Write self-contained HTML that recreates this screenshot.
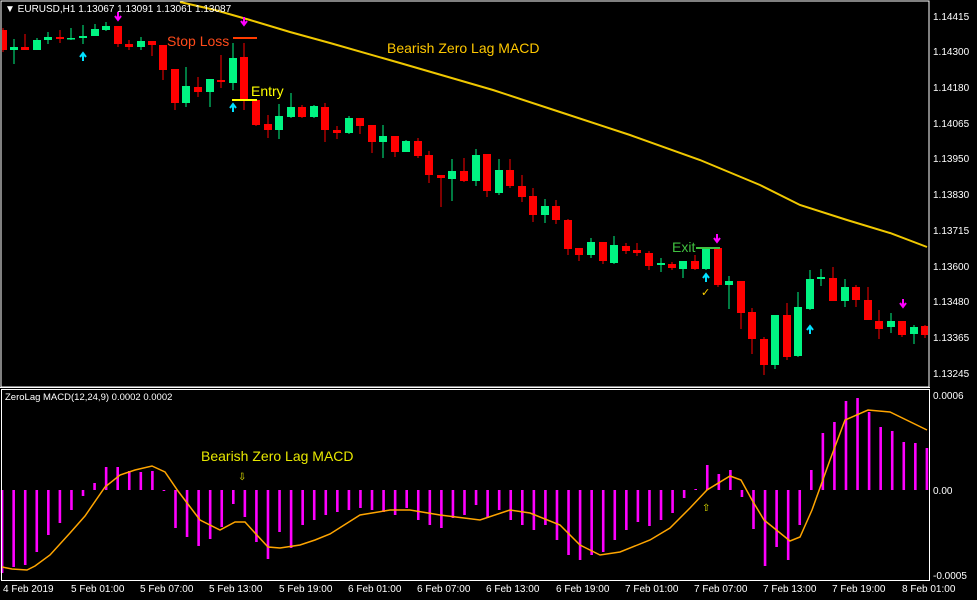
<!DOCTYPE html>
<html><head><meta charset="utf-8"><style>
html,body{margin:0;padding:0;background:#000;overflow:hidden}
svg{display:block}
text{font-family:"Liberation Sans",sans-serif}
</style></head><body>
<svg id="s" width="977" height="600" xmlns="http://www.w3.org/2000/svg">
<rect width="977" height="600" fill="#000"/>
<g id="cd"></g>
<polyline fill="none" stroke="#f0c800" stroke-width="2" points="180,2 215,10 250,20 290,32 330,43 400,63 493,90 560,112 630,135 700,160 760,185 800,205 847,220 890,233 927,247"/>
<line x1="233" y1="38" x2="257" y2="38" stroke="#ff3c00" stroke-width="2"/>
<text x="167" y="46" fill="#ff4a1a" font-size="14">Stop Loss</text>
<line x1="232" y1="100" x2="257" y2="100" stroke="#ffff00" stroke-width="2"/>
<text x="251" y="96" fill="#ffff00" font-size="14">Entry</text>
<text x="387" y="53" fill="#ffc800" font-size="14">Bearish Zero Lag MACD</text>
<line x1="696" y1="248" x2="720" y2="248" stroke="#40c040" stroke-width="2"/>
<text x="672" y="252" fill="#40c040" font-size="14">Exit</text>
<g id="ar"></g>
<text x="701" y="296" fill="#ffd000" font-size="11">✓</text>
<rect x="1" y="1" width="928" height="386" fill="none" stroke="#fff" stroke-width="1"/>
<line x1="0" y1="387.5" x2="930" y2="387.5" stroke="#fff" stroke-width="1"/>
<text x="5" y="12" fill="#fff" font-size="10">▼ EURUSD,H1  1.13067 1.13091 1.13061 1.13087</text>
<g fill="#fff" font-size="10">
<text x="933" y="20">1.14415</text><text x="933" y="55">1.14300</text><text x="933" y="91">1.14180</text><text x="933" y="127">1.14065</text><text x="933" y="162">1.13950</text><text x="933" y="198">1.13830</text><text x="933" y="234">1.13715</text><text x="933" y="270">1.13600</text><text x="933" y="305">1.13480</text><text x="933" y="341">1.13365</text><text x="933" y="377">1.13245</text>
<text x="933" y="399">0.0006</text><text x="933" y="494">0.00</text><text x="933" y="579">-0.0005</text>
</g>
<g id="hg"></g>
<polyline fill="none" stroke="#ffa500" stroke-width="1.5" points="2,567 12,569 27,570 35,566 50,555 70,533 85,516 105,487 120,475 135,470 152,466 165,472 178,491 200,520 220,530 235,522 245,522 255,533 268,547 280,548 300,545 315,540 330,534 360,515 390,510 410,510 440,515 480,520 510,510 530,513 560,525 580,545 600,555 620,552 650,540 670,528 690,508 707,490 730,476 741,480 752,500 764,520 790,541 800,537 812,510 830,460 845,420 868,410 890,412 927,430"/>
<text x="201" y="461" fill="#e8e800" font-size="14">Bearish Zero Lag MACD</text>
<text x="238" y="480" fill="#e0e000" font-size="10">⇩</text>
<text x="702" y="511" fill="#e0e000" font-size="10">⇧</text>
<text x="5" y="400" fill="#fff" font-size="9.5">ZeroLag MACD(12,24,9) 0.0002 0.0002</text>
<rect x="1.5" y="389.5" width="928" height="191" fill="none" stroke="#fff" stroke-width="1"/>
<g fill="#fff" font-size="10">
<text x="3" y="592">4 Feb 2019</text><text x="71" y="592">5 Feb 01:00</text><text x="140" y="592">5 Feb 07:00</text><text x="209" y="592">5 Feb 13:00</text><text x="279" y="592">5 Feb 19:00</text><text x="348" y="592">6 Feb 01:00</text><text x="417" y="592">6 Feb 07:00</text><text x="486" y="592">6 Feb 13:00</text><text x="556" y="592">6 Feb 19:00</text><text x="625" y="592">7 Feb 01:00</text><text x="694" y="592">7 Feb 07:00</text><text x="763" y="592">7 Feb 13:00</text><text x="832" y="592">7 Feb 19:00</text><text x="902" y="592">8 Feb 01:00</text>
</g>
</svg>
<script>
var NS="http://www.w3.org/2000/svg";
function el(p,t,a){var e=document.createElementNS(NS,t);for(var k in a)e.setAttribute(k,a[k]);p.appendChild(e);return e;}
var R=[[3,30,50,28,52],[25,47,50,34,50],[60,37,39,30,43],[118,26,44,26,47],[129,44,47,40,50],[152,41,45,41,56],[163,45,70,45,80],[175,69,103,69,110],[198,87,92,77,97],[221,80,82,55,88],[244,57,99,43,110],[256,100,125,100,126],[268,124,130,115,138],[302,107,117,105,118],[325,107,130,103,142],[337,130,133,126,139],[360,118,126,118,134],[372,125,142,125,153],[395,136,152,136,157],[418,141,156,138,158],[429,155,175,151,183],[441,175,178,175,207],[464,171,181,158,182],[487,154,191,154,197],[510,170,186,159,188],[522,186,197,175,202],[533,196,215,188,222],[556,206,220,200,224],[568,220,249,219,255],[579,248,255,248,261],[603,242,261,242,264],[626,246,251,243,254],[637,250,253,243,256],[649,253,266,251,270],[672,264,268,262,270],[695,261,269,255,270],[718,248,285,248,287],[741,281,313,281,329],[752,312,339,308,354],[764,339,365,337,375],[787,315,357,303,360],[833,278,301,267,301],[856,287,300,285,307],[868,300,320,287,320],[879,321,329,310,339],[902,321,335,321,337],[925,326,335,325,338]];
var G=[[14,47,50,39,64],[37,40,50,38,50],[48,37,40,32,44],[71,38,39,28,40],[83,36,38,25,44],[95,29,36,24,36],[106,26,30,22,31],[141,41,47,37,50],[186,86,103,67,107],[210,79,92,79,107],[233,58,83,43,90],[279,116,130,104,139],[291,107,117,93,118],[314,106,117,105,118],[349,118,133,116,134],[383,136,142,125,158],[406,141,152,140,152],[452,171,179,159,201],[476,155,181,149,186],[499,170,193,159,195],[545,206,215,199,223],[591,242,255,238,258],[614,245,263,236,264],[661,263,265,258,272],[683,261,269,261,278],[706,248,269,247,270],[729,281,285,276,309],[775,315,365,315,369],[798,307,356,292,357],[810,279,309,270,310],[821,277,279,269,286],[845,287,301,279,307],[891,321,327,313,333],[914,327,334,325,344]];
var cd=document.getElementById("cd");
function draw(a,c){a.forEach(function(d){var x0=Math.max(2,d[0]-4),x1=Math.min(928,d[0]+4);
el(cd,"line",{x1:d[0],x2:d[0],y1:d[3],y2:d[4],stroke:c,"stroke-width":1});
el(cd,"rect",{x:x0,y:d[1],width:x1-x0,height:Math.max(1.5,d[2]-d[1]),fill:c});});}
draw(R,"#ff0000");draw(G,"#00f582");
var ar=document.getElementById("ar");
[[118,12],[244,17],[717,234],[903,299]].forEach(function(p){el(ar,"path",{d:"M"+(p[0]-3)+" "+(p[1]+4)+"L"+p[0]+" "+(p[1]+8)+"L"+(p[0]+3)+" "+(p[1]+4)+"M"+p[0]+" "+p[1]+"V"+(p[1]+8),stroke:"#ff00ff","stroke-width":2,fill:"none"});});
[[83,53],[233,104],[706,274],[810,326]].forEach(function(p){el(ar,"path",{d:"M"+(p[0]-3)+" "+(p[1]+4)+"L"+p[0]+" "+p[1]+"L"+(p[0]+3)+" "+(p[1]+4)+"M"+p[0]+" "+p[1]+"V"+(p[1]+8),stroke:"#00e0ff","stroke-width":2,fill:"none"});});
var H=[573,567,565,552,535,523,510,496,483,467,467,471,472,471,491,528,537,546,539,527,504,517,542,559,532,548,525,520,515,512,510,508,510,512,515,508,520,525,528,518,515,505,518,510,520,525,530,525,540,555,560,555,552,540,530,522,526,520,513,498,489,465,474,470,497,529,566,547,560,525,470,433,422,401,398,412,427,431,442,443,448];
var hg=document.getElementById("hg");
H.forEach(function(v,i){var x=2+i*11.56;if(x>928)return;el(hg,"rect",{x:x-1.2,y:Math.min(v,490),width:2.6,height:Math.max(1,Math.abs(v-490)),fill:"#ff00ff"});});
</script>
</body></html>
